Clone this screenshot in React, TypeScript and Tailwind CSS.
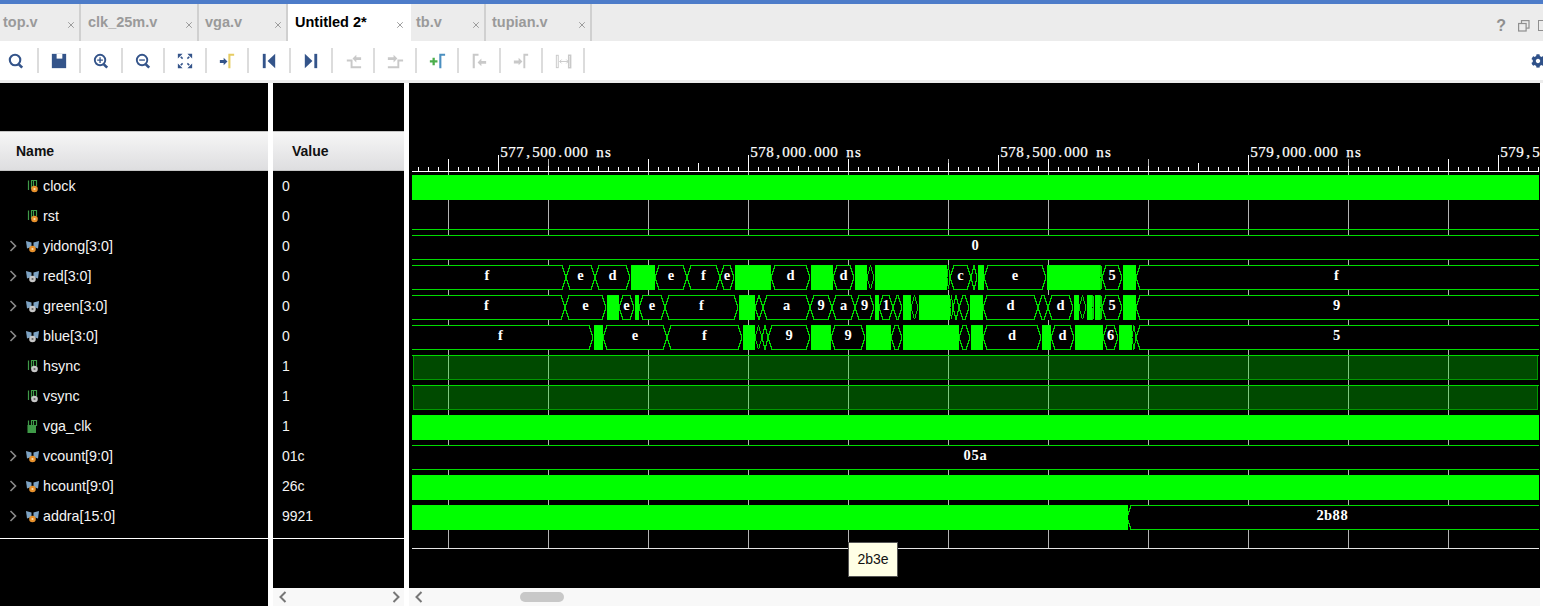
import { ReactNode } from 'react';
import { FaCog } from 'react-icons/fa';
import { X } from 'lucide-react';

const tabs = [
  { name: 'top.v', width: 'w-[81px]', pad: 'pl-[3px]' },
  { name: 'clk_25m.v', width: 'w-[118px]', pad: 'pl-[7px]' },
  { name: 'vga.v', width: 'w-[89px]', pad: 'pl-[6px]' },
  { name: 'Untitled 2*', width: 'w-[123px]', pad: 'pl-[7px]', active: true },
  { name: 'tb.v', width: 'w-[75px]', pad: 'pl-[5px]' },
  { name: 'tupian.v', width: 'w-[106px]', pad: 'pl-[6px]' },
];

type Signal = { name: string; value: string; bus?: boolean; badge: 'orange' | 'gray' | 'green' };

const signals: Signal[] = [
  { name: 'clock', value: '0', badge: 'orange' },
  { name: 'rst', value: '0', badge: 'orange' },
  { name: 'yidong[3:0]', value: '0', bus: true, badge: 'orange' },
  { name: 'red[3:0]', value: '0', bus: true, badge: 'gray' },
  { name: 'green[3:0]', value: '0', bus: true, badge: 'gray' },
  { name: 'blue[3:0]', value: '0', bus: true, badge: 'gray' },
  { name: 'hsync', value: '1', badge: 'gray' },
  { name: 'vsync', value: '1', badge: 'gray' },
  { name: 'vga_clk', value: '1', badge: 'green' },
  { name: 'vcount[9:0]', value: '01c', bus: true, badge: 'orange' },
  { name: 'hcount[9:0]', value: '26c', bus: true, badge: 'orange' },
  { name: 'addra[15:0]', value: '9921', bus: true, badge: 'orange' },
];

// each segment is [end x, label]; '#' is a solid block, '' an unlabelled sliver
type Seg = [number, string];

const redSegs: Seg[] = [
  [566, 'f'], [595, 'e'], [630, 'd'], [655, '#'], [687, 'e'], [720, 'f'], [734, 'e'], [771, '#'],
  [810, 'd'], [833, '#'], [854, 'd'], [867, '#'], [874, ''], [947, '#'], [950, ''], [971, 'c'],
  [977, ''], [984, '#'], [1046, 'e'], [1100, '#'], [1102, ''], [1122, '5'], [1136, '#'], [1539, 'f'],
];

const greenSegs: Seg[] = [
  [565, 'f'], [606, 'e'], [619, '#'], [634, 'e'], [639, '#'], [665, 'e'], [738, 'f'], [755, '#'],
  [763, ''], [810, 'a'], [832, '9'], [855, 'a'], [874, '9'], [879, '#'], [893, '1'], [902, ''],
  [911, '#'], [918, ''], [950, '#'], [953, ''], [959, ''], [969, ''], [983, '#'], [1038, 'd'],
  [1048, ''], [1073, 'd'], [1079, '#'], [1086, ''], [1092, '#'], [1094, ''], [1100, '#'], [1102, ''],
  [1122, '5'], [1136, '#'], [1539, '9'],
];

const blueSegs: Seg[] = [
  [593, 'f'], [603, '#'], [667, 'e'], [742, 'f'], [755, '#'], [762, ''], [768, ''], [810, '9'],
  [831, '#'], [865, '9'], [891, '#'], [902, ''], [959, '#'], [970, ''], [983, '#'], [1041, 'd'],
  [1051, '#'], [1074, 'd'], [1103, '#'], [1118, '6'], [1132, '#'], [1136, ''], [1539, '5'],
];

const rowTop = (i: number) => 175 + 30 * i;

function cellXs(text: string, start: number) {
  return text
    .split('')
    .map((_, i) => start + i * 8 + 4)
    .join(' ');
}

function Bus({ row, segs }: { row: number; segs: Seg[] }) {
  const top = rowTop(row);
  let start = 412;
  return (
    <g>
      {segs.map(([end, label], i) => {
        const x0 = start;
        start = end;
        if (label === '#') {
          return <rect key={i} x={x0 + 1} y={top} width={end - x0 - 1} height={25} fill="#00ff00" />;
        }
        const slope = Math.min(4, (end - x0) / 2);
        const t = top + 0.5;
        const b = top + 24.5;
        const m = top + 12.5;
        const first = i === 0;
        const last = end === 1539;
        const lx = first ? x0 : x0 + slope;
        const rx = last ? end : end - slope;
        const outline = [
          `M${lx} ${t}H${rx}`,
          `M${lx} ${b}H${rx}`,
          first ? '' : `M${x0} ${m}L${lx} ${t}M${x0} ${m}L${lx} ${b}`,
          last ? '' : `M${end} ${m}L${rx} ${t}M${end} ${m}L${rx} ${b}`,
        ].join('');
        const labelX = (x0 + end) / 2 - (first ? 2 : last ? 1 : 0);
        return (
          <g key={i}>
            <path d={outline} fill="none" stroke="#00dc00" />
            {label && <WaveLabel x={labelX} y={top + 15}>{label}</WaveLabel>}
          </g>
        );
      })}
    </g>
  );
}

function WaveLabel({ x, y, children }: { x: number; y: number; children: string }) {
  return (
    <text
      x={cellXs(children, x - (children.length * 8) / 2)}
      y={y}
      textAnchor="middle"
      fill="#fff"
      className="font-['Liberation_Serif',serif] text-[14.5px] font-bold"
    >
      {children}
    </text>
  );
}

function Ruler() {
  const ticks: ReactNode[] = [];
  for (let x = 418; x <= 1538; x += 10) {
    let y = 167;
    if ((x - 498) % 250 === 0) y = 155;
    else if ((x - 448) % 200 === 0) y = 159;
    else if ((x - 698) % 250 === 0) y = 163;
    else if ((x - 448) % 50 === 0) y = 166;
    ticks.push(<line key={x} x1={x + 0.5} x2={x + 0.5} y1={y} y2={171} stroke="#fff" />);
  }
  const labels = [
    { x: 500, t: '577,500.000 ns' },
    { x: 750, t: '578,000.000 ns' },
    { x: 1000, t: '578,500.000 ns' },
    { x: 1250, t: '579,000.000 ns' },
    { x: 1500, t: '579,5' },
  ];
  return (
    <g>
      <line x1={412} x2={1539} y1={171.5} y2={171.5} stroke="#fff" />
      {ticks}
      {labels.map((l) => (
        <text
          key={l.x}
          x={cellXs(l.t, l.x)}
          y={157}
          textAnchor="middle"
          fill="#fff"
          stroke="#fff"
          strokeWidth={0.25}
          className="font-['Liberation_Serif',serif] text-[15px]"
        >
          {l.t}
        </text>
      ))}
    </g>
  );
}

function Waves() {
  const grid = [448, 548, 648, 748, 848, 948, 1048, 1148, 1248, 1348, 1448];
  return (
    <svg viewBox="409 83 1131 505" shapeRendering="crispEdges" className="block h-[505px] w-[1131px]">
      {grid.map((x) => (
        <line key={x} x1={x + 0.5} x2={x + 0.5} y1={159} y2={548} stroke="#b4b4b4" />
      ))}
      <Ruler />
      {[0, 8, 10].map((r) => (
        <rect key={r} x={412} y={rowTop(r)} width={1127} height={25} fill="#00ff00" />
      ))}
      <line x1={412} x2={1539} y1={229.5} y2={229.5} stroke="#00e000" />
      {/* black under the buses hides the grid lines */}
      {[2, 3, 4, 5, 9, 11].map((r) => (
        <rect key={r} x={412} y={rowTop(r)} width={1127} height={25} fill="#000" />
      ))}
      <Bus row={2} segs={[[1539, '']]} />
      <WaveLabel x={975} y={250}>0</WaveLabel>
      <Bus row={3} segs={redSegs} />
      <Bus row={4} segs={greenSegs} />
      <Bus row={5} segs={blueSegs} />
      {[6, 7].map((r) => (
        <g key={r}>
          <rect x={413.5} y={rowTop(r) + 0.5} width={1124} height={24} fill="#00ff00" fillOpacity={0.29} stroke="#009a00" />
          <line x1={412} x2={1539} y1={rowTop(r) + 0.5} y2={rowTop(r) + 0.5} stroke="#00dc00" />
        </g>
      ))}
      <Bus row={9} segs={[[1539, '']]} />
      <WaveLabel x={975} y={460}>05a</WaveLabel>
      <Bus row={11} segs={[[1127, '#'], [1539, '2b88']]} />
      <rect x={412} y={505} width={716} height={25} fill="#00ff00" />
      <line x1={412} x2={1539} y1={548.5} y2={548.5} stroke="#e4e4e4" />
    </svg>
  );
}

function Chevron({ dir, color = '#8a8a8a', weight = 1.6 }: { dir: 'left' | 'right'; color?: string; weight?: number }) {
  return (
    <svg width="8" height="12" viewBox="0 0 8 12" fill="none" stroke={color} strokeWidth={weight}>
      <polyline points={dir === 'right' ? '1.5,1 6.5,6 1.5,11' : '6.5,1 1.5,6 6.5,11'} />
    </svg>
  );
}

function SignalIcon({ bus, badge }: { bus?: boolean; badge: Signal['badge'] }) {
  const cx = bus ? 6.5 : 8.5;
  return (
    <svg width="13" height="14" viewBox="0 0 13 14" className="shrink-0">
      {bus ? (
        <g fill="#7da3c4">
          <polygon points="0,2 5.500,3.500 5.500,8 1,9.500" />
          <polygon points="13,2 7.500,3.500 7.500,8 12,9.500" />
        </g>
      ) : (
        <path d="M2.500 11V1.500M5.500 10V1.500H7.500V8M7.500 1.500H10.500V7" fill="none" stroke="#3f9a48" strokeWidth="1.200" />
      )}
      {badge === 'green' ? (
        <rect x="1.500" y="6" width="8.500" height="8" fill="#3f9a48" />
      ) : (
        <g>
          <circle cx={cx} cy="10" r="3.300" fill={badge === 'orange' ? '#e8912c' : '#c8c8c8'} />
          <circle cx={cx} cy="10" r="1.100" fill={badge === 'orange' ? '#ffe0b0' : '#666'} />
        </g>
      )}
    </svg>
  );
}

const BLUE = '#34548a';
const GRAY = '#c9c9c9';

const toolIcons: ReactNode[] = [
  <g fill="none" stroke={BLUE} strokeWidth="2.200">
    <circle cx="9.500" cy="9.500" r="5.500" />
    <path d="M13.500 14l3.500 3.500" strokeWidth="2.800" />
  </g>,
  <g>
    <rect x="3" y="3" width="15" height="15" fill={BLUE} />
    <rect x="8" y="3" width="6" height="5" fill="#fff" />
  </g>,
  <g fill="none" stroke={BLUE} strokeWidth="2">
    <circle cx="9.500" cy="9.500" r="5.500" />
    <path d="M13.500 14l3.500 3.500" strokeWidth="2.800" />
    <path d="M6.500 9.500h6M9.500 6.500v6" strokeWidth="1.400" />
  </g>,
  <g fill="none" stroke={BLUE} strokeWidth="2">
    <circle cx="9.500" cy="9.500" r="5.500" />
    <path d="M13.500 14l3.500 3.500" strokeWidth="2.800" />
    <path d="M6.500 9.500h6" strokeWidth="1.400" />
  </g>,
  <g fill={BLUE}>
    <path d="M3 3h5L3 8zM18 3h-5l5 5zM3 18h5l-5-5zM18 18h-5l5-5z" />
    <path d="M6 6l2 2M15 6l-2 2M6 15l2-2M15 15l-2-2" stroke={BLUE} strokeWidth="1.600" />
  </g>,
  <g>
    <path d="M3 9.500h4V7l4 4-4 4v-2.500H3z" fill={BLUE} />
    <path d="M13 18V4h5" fill="none" stroke="#e6cc62" strokeWidth="2.200" />
  </g>,
  <g fill={BLUE}>
    <rect x="4" y="3" width="3" height="15" />
    <polygon points="17,3 17,18 9,10.500" />
  </g>,
  <g fill={BLUE}>
    <rect x="14" y="3" width="3" height="15" />
    <polygon points="4,3 4,18 12,10.500" />
  </g>,
  <g fill={GRAY}>
    <path d="M4 10h5v7h10" fill="none" stroke={GRAY} strokeWidth="2" />
    <path d="M10 8l4-4v2.500h5v3h-5V12z" />
  </g>,
  <g fill={GRAY}>
    <path d="M3 17h11v-7h5" fill="none" stroke={GRAY} strokeWidth="2" />
    <path d="M13 8L9 4v2.500H3v3h6V12z" />
  </g>,
  <g>
    <path d="M3 11h8M7 7v8" stroke="#4cae4c" strokeWidth="2.400" />
    <path d="M14 18V4h5" fill="none" stroke="#4a8fc0" strokeWidth="2.200" />
  </g>,
  <g fill={GRAY}>
    <path d="M5 18V4h5" fill="none" stroke={GRAY} strokeWidth="2.200" />
    <path d="M9 12l4-4v2.500h5v3h-5V16z" />
  </g>,
  <g fill={GRAY}>
    <path d="M3 10h5V7l4 4-4 4v-2H3z" />
    <path d="M14 18V4h4" fill="none" stroke={GRAY} strokeWidth="2" />
  </g>,
  <g fill="none" stroke={GRAY}>
    <rect x="3.500" y="4.500" width="2" height="13" />
    <rect x="16.500" y="4.500" width="2" height="13" strokeWidth="1.600" />
    <path d="M7 11h9M9 9l-2 2 2 2M14 9l2 2-2 2" />
  </g>,
];

function TabBar() {
  return (
    <div className="flex h-[37px] items-stretch bg-[#ececec]">
      {tabs.map((tab) => (
        <div
          key={tab.name}
          className={`flex items-center justify-between text-[14.5px] font-bold ${tab.width} ${tab.pad} ${
            tab.active ? 'bg-white pr-[6px] text-black' : 'border-r-2 border-[#d0d0d0] pr-[3px] text-[#9a9a9a]'
          }`}
        >
          <span>{tab.name}</span>
          <X size={10} strokeWidth={2} color="#8c8c8c" className="mt-1" />
        </div>
      ))}
      <div className="ml-auto flex items-center overflow-hidden pt-[6px]">
        <span className="mr-[12px] text-[16px] font-bold text-[#8f8f8f]">?</span>
        <svg width="12" height="12" viewBox="0 0 12 12" fill="none" stroke="#8f8f8f" strokeWidth="1.200" className="mr-[8px]">
          <rect x="3.500" y="0.600" width="7.500" height="7.500" />
          <rect x="0.600" y="3.500" width="7.500" height="7.500" fill="#ececec" />
        </svg>
        <div className="h-[11px] w-[5px] border-y-[1.500px] border-l-[1.500px] border-[#8f8f8f]" />
      </div>
    </div>
  );
}

function Toolbar() {
  return (
    <div className="flex h-[42px] items-center overflow-hidden border-b-[3px] border-[#ececec] bg-white">
      {toolIcons.map((icon, i) => (
        <div
          key={i}
          className={`flex h-[25px] items-center justify-center border-r-2 border-[#dcdcdc] ${
            i === 0 ? 'w-[39px] pr-[5px]' : 'w-[42px]'
          }`}
        >
          <svg width="20" height="20" viewBox="0 0 21 21">
            {icon}
          </svg>
        </div>
      ))}
      <FaCog size={14} color="#2f5189" className="ml-auto mr-[-2px] shrink-0" />
    </div>
  );
}

function ColumnHeader({ children, pad }: { children: ReactNode; pad: string }) {
  return (
    <div
      className={`flex h-[40px] items-center border-y border-[#c4c4c4] bg-gradient-to-b from-[#f6f6f6] to-[#dedee0] text-[14px] font-bold text-[#111] ${pad}`}
    >
      {children}
    </div>
  );
}

export default function App() {
  return (
    <div className="flex h-[606px] w-[1543px] flex-col overflow-hidden bg-white font-['Liberation_Sans',Arial,sans-serif]">
      <div className="h-1 bg-[#4d7cc9]" />
      <TabBar />
      <Toolbar />
      <div className="flex min-h-0 flex-1 gap-[5px] pr-[3px]">
        {/* names */}
        <div className="flex w-[268px] flex-col bg-black">
          <div className="h-[48px]" />
          <ColumnHeader pad="pl-[16px]">Name</ColumnHeader>
          {signals.map((s) => (
            <div key={s.name} className="flex h-[30px] items-center pl-[9px] text-[14.300px] text-[#f4f4f4]">
              <div className="flex w-[17px] items-center">{s.bus && <Chevron dir="right" />}</div>
              <div className="flex w-[17px] items-center">
                <SignalIcon bus={s.bus} badge={s.badge} />
              </div>
              <span className="mt-[2px]">{s.name}</span>
            </div>
          ))}
          <div className="mt-[7px] border-t border-white" />
        </div>
        {/* values */}
        <div className="flex w-[131px] flex-col bg-black">
          <div className="h-[48px]" />
          <ColumnHeader pad="pl-[19px]">Value</ColumnHeader>
          {signals.map((s) => (
            <div key={s.name} className="flex h-[30px] items-center pl-[9px] text-[14px] text-[#f4f4f4]">
              {s.value}
            </div>
          ))}
          <div className="mt-[7px] border-t border-white" />
          <div className="flex-1" />
          <div className="flex h-[18px] items-center justify-between bg-[#f8f8f8] pl-[6px] pr-[4px]">
            <Chevron dir="left" color="#777" weight={2} />
            <Chevron dir="right" color="#777" weight={2} />
          </div>
        </div>
        {/* waveform */}
        <div className="relative flex w-[1131px] flex-col bg-black">
          <Waves />
          <div className="flex h-[18px] items-center bg-[#f8f8f8] px-[6px]">
            <Chevron dir="left" color="#777" weight={2} />
            <div className="ml-[97px] h-[10px] w-[44px] rounded-full bg-[#c8c8c8]" />
          </div>
          <div className="absolute left-[439px] top-[459px] flex h-[35px] w-[50px] items-center justify-center border border-[#555] bg-[#ffffe6] text-[14px] text-[#111]">
            2b3e
          </div>
        </div>
      </div>
    </div>
  );
}
